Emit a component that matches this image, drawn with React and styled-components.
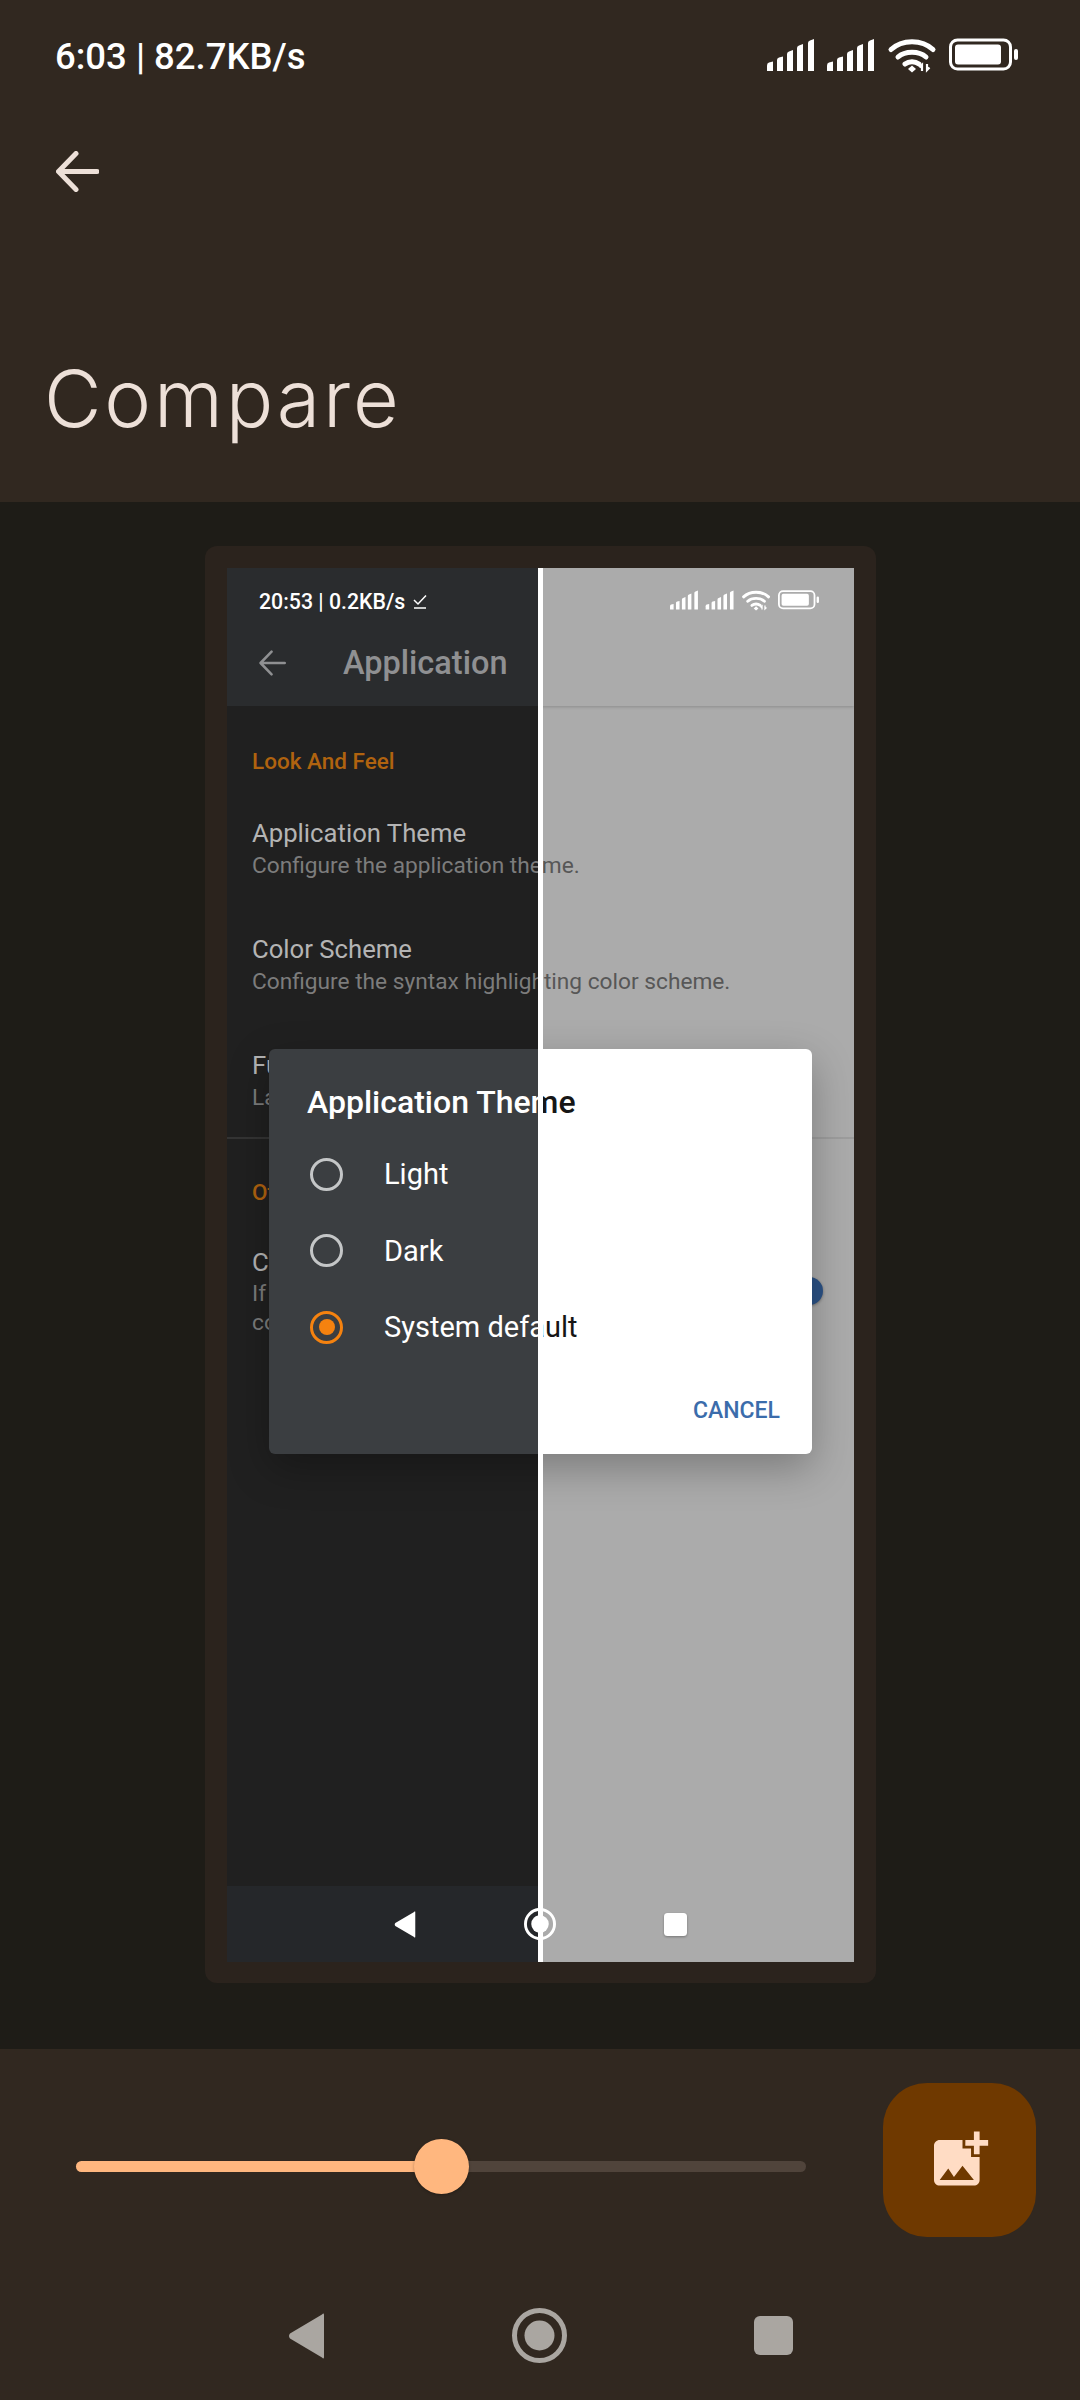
import React from 'react';
import styled, { createGlobalStyle } from 'styled-components';

const SPLIT = 311;

const GlobalStyle = createGlobalStyle`
    html, body {
        margin: 0;
        padding: 0;
        background: #1e1c17;
        font-family: Roboto, "Liberation Sans", sans-serif;
    }
    * {
        box-sizing: border-box;
    }
`
const Page = styled.div`
    width: 1080px;
    height: 2400px;
    display: flex;
    flex-direction: column;
    overflow: hidden;
`
const Header = styled.header`
    height: 502px;
    flex: none;
    background: #312820;
    color: #ede0d8;
`
const StatusBar = styled.div`
    height: ${p => p.$height}px;
    display: flex;
    align-items: center;
    justify-content: space-between;
    padding: ${p => p.$padding};
    color: #fff;
`
const StatusText = styled.div`
    display: flex;
    align-items: center;
    gap: 8px;
    font-size: ${p => p.$size}px;
    font-weight: 500;
    white-space: nowrap;
`
const BackButton = styled.div`
    display: flex;
    padding: 39px 0 0 56px;
`
const PageTitle = styled.h1`
    margin: 161px 0 0 44px;
    font-family: Inter, sans-serif;
    font-size: 79px;
    line-height: 90px;
    font-weight: 300;
    letter-spacing: 2.8px;
`
const Main = styled.main`
    height: 1547px;
    flex: none;
    background: #1e1c17;
    padding-top: 44px;
`
const Frame = styled.div`
    width: 671px;
    height: 1437px;
    margin-left: 205px;
    padding: 22px;
    border-radius: 12px;
    background: #2b231d;
`
const Compare = styled.div`
    position: relative;
    width: 627px;
    height: 1394px;
    overflow: hidden;
`
const ClipLayer = styled.div`
    position: absolute;
    top: 0;
    left: 0;
    bottom: 0;
    overflow: hidden;
`
const Handle = styled.div`
    position: absolute;
    top: 0;
    bottom: 0;
    width: 5px;
    background: #fff;
`
const Screen = styled.div`
    position: relative;
    width: 627px;
    height: 1394px;
    display: flex;
    flex-direction: column;
    background: ${p => (p.$dark ? '#202020' : '#ababab')};
`
const AppBar = styled.div`
    height: 138px;
    flex: none;
    background: ${p => (p.$dark ? '#2a2c2e' : '#ababab')};
    box-shadow: ${p => (p.$dark ? 'none' : '0 1px 3px rgba(0, 0, 0, 0.18)')};
`
const AppBarRow = styled.div`
    display: flex;
    align-items: center;
    height: 60px;
    padding-left: 32px;
    margin-top: -1px;
`
const AppBarTitle = styled.div`
    margin-left: 57px;
    font-size: 32.5px;
    font-weight: 500;
    color: #8f9092;
`
const Content = styled.div`
    flex: 1;
    padding-top: 41px;
`
const SectionLabel = styled.div`
    padding-left: 25px;
    font-size: 22.5px;
    line-height: 28px;
    font-weight: 500;
    color: #b0630f;
`
const Item = styled.div`
    display: flex;
    align-items: center;
    justify-content: space-between;
    margin-top: ${p => p.$top}px;
    padding: 0 31px 0 25px;
`
const ItemTitle = styled.div`
    font-size: 25.7px;
    line-height: 32px;
    color: ${p => (p.$dark ? '#b4b4b4' : '#444')};
`
const ItemText = styled.div`
    margin-top: 1px;
    font-size: 22.7px;
    line-height: ${p => p.$line || 32}px;
    color: ${p => (p.$dark ? '#7c7c7c' : '#575757')};
`
const Separator = styled.div`
    height: 2px;
    margin: 23px 0 39px;
    background: ${p => (p.$dark ? '#343434' : '#9d9d9d')};
`
const SwitchThumb = styled.div`
    width: 28px;
    height: 28px;
    border-radius: 50%;
    background: #2b5286;
    box-shadow: 0 1px 3px rgba(0, 0, 0, 0.35);
`
const BottomNav = styled.div`
    height: 76px;
    flex: none;
    display: flex;
    align-items: center;
    justify-content: center;
    gap: ${p => p.$gap}px;
    background: ${p => p.$bg};
`
const Dialog = styled.div`
    position: absolute;
    left: 42px;
    top: 481px;
    width: 543px;
    height: 405px;
    display: flex;
    flex-direction: column;
    border-radius: 6px;
    padding: 32px 32px 0 38px;
    background: ${p => (p.$dark ? '#3b3e41' : '#fff')};
    color: ${p => (p.$dark ? '#fff' : '#161616')};
    box-shadow: 0 14px 40px rgba(0, 0, 0, 0.28);
`
const DialogTitle = styled.div`
    font-size: 32px;
    line-height: 42px;
    font-weight: 500;
`
const Options = styled.div`
    display: flex;
    flex-direction: column;
    margin-top: 13px;
`
const Option = styled.label`
    height: 76.5px;
    display: flex;
    align-items: center;
    gap: 41px;
    padding-left: 3px;
    font-size: 29px;
`
const Radio = styled.span`
    width: 33px;
    height: 33px;
    flex: none;
    display: flex;
    align-items: center;
    justify-content: center;
    border: 3.5px solid ${p => (p.$on ? '#f5820f' : '#c4c6c7')};
    border-radius: 50%;
    &::after {
        content: '';
        display: ${p => (p.$on ? 'block' : 'none')};
        width: 16px;
        height: 16px;
        border-radius: 50%;
        background: #f5820f;
    }
`
const DialogActions = styled.div`
    display: flex;
    justify-content: flex-end;
    margin-top: 30px;
`
const DialogButton = styled.div`
    font-size: 23px;
    line-height: 30px;
    font-weight: 500;
    color: #3b6cab;
`
const Footer = styled.footer`
    flex: 1;
    background: #312820;
`
const Controls = styled.div`
    display: flex;
    align-items: flex-start;
    gap: 77px;
    padding: 34px 0 0 76px;
`
const Slider = styled.div`
    position: relative;
    width: 730px;
    height: 11px;
    margin-top: 78px;
    border-radius: 6px;
    background: #50443b;
`
const SliderFill = styled.div`
    height: 100%;
    border-radius: 6px;
    background: #ffb77f;
`
const SliderThumb = styled.div`
    position: absolute;
    top: -22px;
    width: 55px;
    height: 55px;
    margin-left: -27px;
    border-radius: 50%;
    background: #ffb77f;
    box-shadow: 0 1px 3px rgba(0, 0, 0, 0.3);
`
const Fab = styled.div`
    width: 153px;
    height: 154px;
    display: flex;
    align-items: center;
    justify-content: center;
    border-radius: 44px;
    background: #6f3900;
`
const SystemNav = styled.div`
    display: flex;
    align-items: center;
    justify-content: center;
    gap: ${p => p.$gap}px;
    margin-top: 71px;
`

const ArrowBack = ({ width, height, color, stroke }) => (
    <svg width={width} height={height} viewBox="0 0 43 41" fill="none" stroke={color} strokeWidth={stroke} strokeLinecap="round" strokeLinejoin="round">
        <path d="M3 20.5H41M20 2.5L2.5 20.5L20 38.5" />
    </svg>
);

const Bars = ({ x }) => (
    <g transform={`translate(${x} 0)`} fill="#fff">
        <path d="M0 27.5Q0 25 2 24.5L6 23.5V33H0Z" />
        <path d="M10 22Q10 20 12 19.5L16 18.5V33H10Z" />
        <path d="M20 16Q20 14 22 13.5L26 12V33H20Z" />
        <path d="M30 10Q30 8 32 7.5L36 6V33H30Z" />
        <path d="M41 5Q41 3 43 2.5L47 1V33H41Z" />
    </g>
);

const StatusIcons = ({ width }) => (
    <svg width={width} height={width * 36 / 251} viewBox="0 0 251 36">
        <Bars x={0} />
        <Bars x={60} />
        <g fill="none" stroke="#fff" strokeLinecap="round">
            <path d="M124 11.5C135 1 155 1 166 11.5" strokeWidth="5" />
            <path d="M131 19C138 12.5 152 12.5 159 19" strokeWidth="5" />
            <path d="M138 26C142 23 148 23 152 26" strokeWidth="5" />
        </g>
        <path d="M141 31L145 27.5L149 31L145 34.5Z" fill="#fff" />
        <path d="M155 33V27L152.5 29.5M160 26V32L162.5 29.5" fill="none" stroke="#fff" strokeWidth="2.2" />
        <rect x="183.5" y="2" width="60" height="29" rx="7" fill="none" stroke="#fff" strokeWidth="3" />
        <rect x="188" y="6.5" width="46" height="20" rx="3" fill="#fff" />
        <rect x="247" y="11" width="4" height="11" rx="2" fill="#fff" />
    </svg>
);

const CheckMark = () => (
    <svg width="14" height="15" viewBox="0 0 14 15" fill="none" stroke="#fff" strokeWidth="1.5">
        <path d="M1 6L5 10L13 1.5M1 14H13" />
    </svg>
);

const NavIcons = ({ size, fill, shadow }) => {
    const { tri, circle, square } = size;
    return (
        <>
            <svg width={tri[0]} height={tri[1]} viewBox="0 0 37 46">
                <path d="M36 2Q36 -0.5 34 1.5L2 20.5Q0 23 2 25.5L34 44.5Q36 46.5 36 44Z" fill={fill} />
            </svg>
            <svg width={circle} height={circle} viewBox="0 0 55 55">
                <circle cx="27.5" cy="27.5" r="25" fill="none" stroke={fill} strokeWidth="5" />
                <circle cx="27.5" cy="27.5" r="15" fill={fill} />
            </svg>
            <svg width={square} height={square} viewBox="0 0 39 39" style={shadow ? { filter: 'drop-shadow(0 1px 1px rgba(0,0,0,.3))' } : undefined}>
                <rect width="39" height="39" rx="6" fill={fill} />
            </svg>
        </>
    );
};

const PhotoPlus = () => (
    <svg width="57" height="57" viewBox="3 1.5 20 20" fill="#ffdcc4" style={{ marginLeft: 6, marginTop: -3 }}>
        <path d="M19 7v2.99s-1.99.01-2 0V7h-3s.01-1.99 0-2h3V2h2v3h3v2h-3zm-3 4V8h-3V5H5c-1.1 0-2 .9-2 2v12c0 1.1.9 2 2 2h12c1.1 0 2-.9 2-2v-8h-3zM5 19l3-4 2 3 3-4 4 5H5z" />
    </svg>
);

const themes = ['Light', 'Dark', 'System default'];

const SettingsScreen = ({ dark }) => (
    <Screen $dark={dark}>
        <AppBar $dark={dark}>
            <StatusBar $height={66} $padding="0 35px 0 32px">
                <StatusText $size={21.3}>20:53 | 0.2KB/s <CheckMark /></StatusText>
                <StatusIcons width={149} />
            </StatusBar>
            <AppBarRow>
                <ArrowBack width={27} height={26} color="#8f9092" stroke={4} />
                <AppBarTitle>Application</AppBarTitle>
            </AppBarRow>
        </AppBar>
        <Content>
            <SectionLabel>Look And Feel</SectionLabel>
            <Item $top={42}>
                <div>
                    <ItemTitle $dark={dark}>Application Theme</ItemTitle>
                    <ItemText $dark={dark}>Configure the application theme.</ItemText>
                </div>
            </Item>
            <Item $top={51}>
                <div>
                    <ItemTitle $dark={dark}>Color Scheme</ItemTitle>
                    <ItemText $dark={dark}>Configure the syntax highlighting color scheme.</ItemText>
                </div>
            </Item>
            <Item $top={51}>
                <div>
                    <ItemTitle $dark={dark}>Fullscreen</ItemTitle>
                    <ItemText $dark={dark}>Layout</ItemText>
                </div>
            </Item>
            <Separator $dark={dark} />
            <SectionLabel>Other</SectionLabel>
            <Item $top={40}>
                <div>
                    <ItemTitle $dark={dark}>Confirm</ItemTitle>
                    <ItemText $dark={dark} $line={30}>If enabled</ItemText>
                    <ItemText $dark={dark} $line={26}>confirm</ItemText>
                </div>
                <SwitchThumb />
            </Item>
        </Content>
        <BottomNav $gap={108} $bg={dark ? '#25272a' : '#ababab'}>
            <NavIcons size={{ tri: [22, 27], circle: 32, square: 23 }} fill="#fff" shadow />
        </BottomNav>
        <Dialog $dark={dark}>
            <DialogTitle>Application Theme</DialogTitle>
            <Options>
                {themes.map((name, i) => (
                    <Option key={name}>
                        <Radio $on={i === 2} />
                        {name}
                    </Option>
                ))}
            </Options>
            <DialogActions>
                <DialogButton>CANCEL</DialogButton>
            </DialogActions>
        </Dialog>
    </Screen>
);

export default function App() {
    return (
        <Page>
            <GlobalStyle />
            <Header>
                <StatusBar $height={112} $padding="0 62px 0 55px">
                    <StatusText $size={36.5}>6:03 | 82.7KB/s</StatusText>
                    <StatusIcons width={251} />
                </StatusBar>
                <BackButton>
                    <ArrowBack width={43} height={41} color="#ede0d8" stroke={5} />
                </BackButton>
                <PageTitle>Compare</PageTitle>
            </Header>
            <Main>
                <Frame>
                    <Compare>
                        <SettingsScreen />
                        <ClipLayer style={{ width: SPLIT }}>
                            <SettingsScreen dark />
                        </ClipLayer>
                        <Handle style={{ left: SPLIT }} />
                    </Compare>
                </Frame>
            </Main>
            <Footer>
                <Controls>
                    <Slider>
                        <SliderFill style={{ width: '50%' }} />
                        <SliderThumb style={{ left: '50%' }} />
                    </Slider>
                    <Fab><PhotoPlus /></Fab>
                </Controls>
                <SystemNav $gap={187}>
                    <NavIcons size={{ tri: [37, 46], circle: 55, square: 39 }} fill="#aaa6a1" />
                </SystemNav>
            </Footer>
        </Page>
    );
}
